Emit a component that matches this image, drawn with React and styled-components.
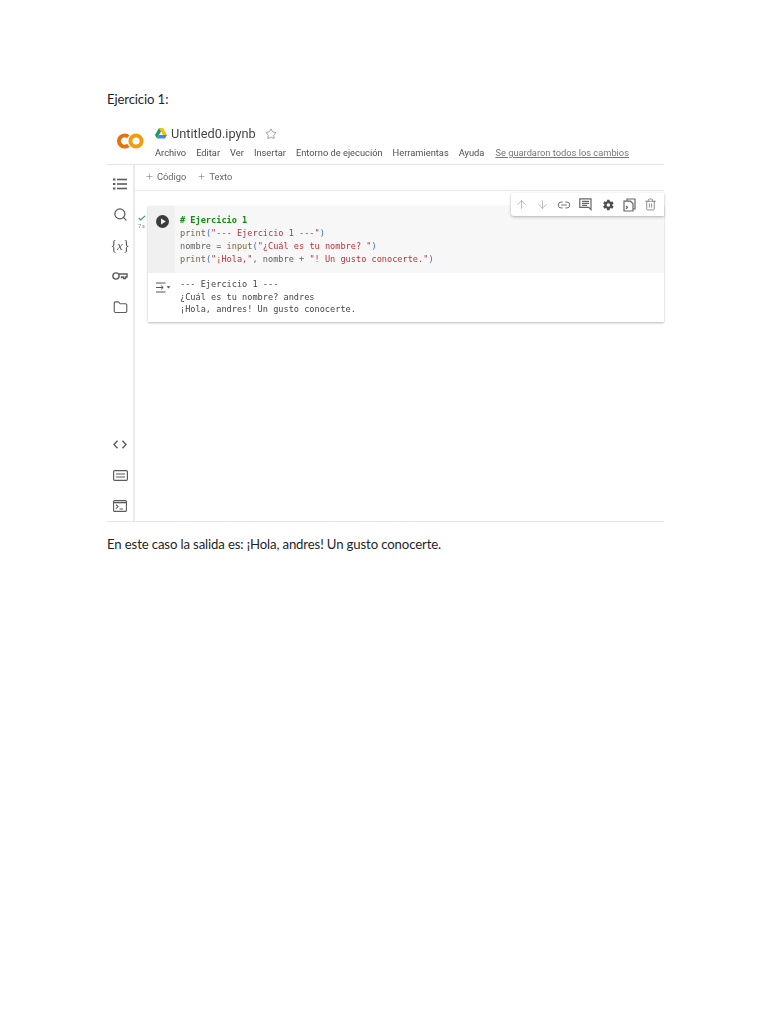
import React from "react";
import styled, { createGlobalStyle } from "styled-components";
import { ArrowUp, ArrowDown, Link2, Search, Folder, Star, Trash2, Plus } from "lucide-react";

const Global = createGlobalStyle`
  html, body { margin: 0; padding: 0; background: #fff; }
`;

const Page = styled.div`
  width: 768px;
  height: 1024px;
  box-sizing: border-box;
  padding: 91px 104px 0 107px;
  background: #fff;
  font-family: "Lato", "Liberation Sans", sans-serif;
  color: #1f1f1f;
  overflow: hidden;
`;

const Paragraph = styled.p`
  margin: 0;
  font-size: 13.2px;
  letter-spacing: -0.14px;
  line-height: 17px;
`;

const Shot = styled.div`
  margin: 14px 0 14px;
  height: 400px;
  display: flex;
  flex-direction: column;
  border-bottom: 1px solid #e6e6e6;
  box-sizing: border-box;
  font-family: "Roboto", "Liberation Sans", sans-serif;
  filter: blur(0.35px);
`;

const Header = styled.header`
  height: 43px;
  flex: none;
  display: flex;
  box-sizing: border-box;
  border-bottom: 1px solid #e4e4e4;
`;

const LogoCell = styled.div`
  width: 48px;
  flex: none;
  padding: 11px 0 0 10px;
  box-sizing: border-box;
`;

const HeaderText = styled.div`
  display: flex;
  flex-direction: column;
  padding-top: 2px;
`;

const TitleRow = styled.div`
  display: flex;
  align-items: center;
  height: 19px;
  gap: 4px;
  color: #444;
  font-size: 12.75px;
`;

const TitleText = styled.span`
  margin-right: 5px;
`;

const Menu = styled.nav`
  display: flex;
  gap: 10px;
  margin-top: 4px;
  font-size: 9.3px;
  line-height: 12px;
  color: #4f4f4f;
  white-space: nowrap;
`;

const Saved = styled.span`
  color: #777;
  text-decoration: underline;
  margin-left: 1px;
`;

const Body = styled.div`
  flex: 1;
  display: flex;
  min-height: 0;
`;

const Sidebar = styled.aside`
  width: 28px;
  flex: none;
  box-sizing: border-box;
  border-right: 2px solid #ebebeb;
  display: flex;
  flex-direction: column;
  justify-content: space-between;
  align-items: center;
  padding: 11px 0 7px;
  color: #5c5c5c;
`;

const SideGroup = styled.div`
  display: flex;
  flex-direction: column;
  align-items: center;
  gap: 14.8px;
`;

const SideSlot = styled.div`
  height: 16px;
  display: flex;
  align-items: center;
  justify-content: center;
  font-family: "Liberation Serif", serif;
  font-size: 14px;
  white-space: nowrap;
`;

const SideVar = styled.i`
  font-size: 13px;
`;

const Main = styled.main`
  flex: 1;
  min-width: 0;
  display: flex;
  flex-direction: column;
`;

const ActionBar = styled.div`
  height: 26px;
  flex: none;
  box-sizing: border-box;
  border-bottom: 1px solid #e8e8e8;
  display: flex;
  align-items: center;
  gap: 11px;
  padding: 0 0 2px 10px;
  font-size: 9.3px;
  color: #666;
`;

const ActionButton = styled.span`
  display: flex;
  align-items: center;
  gap: 3px;
`;

const Workspace = styled.div`
  position: relative;
  flex: 1;
  padding: 15px 0 0 0;
  display: flex;
  align-items: flex-start;
`;

const ExecState = styled.div`
  width: 13px;
  flex: none;
  padding-top: 9px;
  display: flex;
  flex-direction: column;
  align-items: center;
  gap: 2px;
  font-size: 5px;
  line-height: 6px;
  color: #777;
`;

const Cell = styled.section`
  flex: 1;
  min-width: 0;
  box-shadow: 0 1px 2px rgba(0, 0, 0, 0.28);
  background: #fff;
`;

const CodeRow = styled.div`
  display: flex;
  height: 67px;
  background: #f7f7f7;
`;

const Gutter = styled.div`
  width: 27px;
  flex: none;
  background: #f0f0f0;
  padding: 7px 0 0 8px;
  box-sizing: border-box;
`;

const Code = styled.pre`
  margin: 0;
  padding: 8px 0 0 5px;
  font-family: "DejaVu Sans Mono", "Liberation Mono", monospace;
  font-size: 8.6px;
  line-height: 13px;
  color: #5f5f5f;
`;

const Comment = styled.span` color: #118a11; font-weight: 700; `;
const Str = styled.span` color: #b8343f; `;
const Paren = styled.span` color: #3b6fd8; `;
const Builtin = styled.span` color: #75683c; `;

const OutputRow = styled.div`
  display: flex;
  height: 49px;
`;

const OutputGutter = styled.div`
  width: 27px;
  flex: none;
  padding: 5px 0 0 8px;
  box-sizing: border-box;
`;

const Output = styled.pre`
  margin: 0;
  padding: 5px 0 0 5px;
  font-family: "DejaVu Sans Mono", "Liberation Mono", monospace;
  font-size: 8.6px;
  line-height: 12.5px;
  color: #444;
`;

const CellTools = styled.div`
  position: absolute;
  top: 2px;
  right: 0;
  width: 153px;
  height: 23px;
  box-sizing: border-box;
  padding: 0 7px 0 4px;
  display: flex;
  align-items: center;
  justify-content: space-between;
  background: #fff;
  border-radius: 3px 0 0 3px;
  box-shadow: 0 1px 3px rgba(0, 0, 0, 0.3);
  color: #666;
`;

const ColabLogo = () => (
  <svg width="27" height="16" viewBox="0 0 27 16" fill="none">
    <circle cx="19" cy="8" r="5.6" stroke="#f39c0c" strokeWidth="4" />
    <path d="M11.3 3.8a5.6 5.6 0 1 0 0 8.4" stroke="#e8710a" strokeWidth="4" />
  </svg>
);

const DriveLogo = () => (
  <svg width="12" height="11" viewBox="0 0 12 11">
    <path d="M4 0h4l4 7H8z" fill="#fbbc04" />
    <path d="M4 0 0 7l2 3.5L6 3.5z" fill="#1a9e5c" />
    <path d="M2 10.5 4 7h8l-2 3.5z" fill="#4285f4" />
  </svg>
);

const ListIcon = () => (
  <svg width="14" height="12" viewBox="0 0 14 12" fill="currentColor">
    <rect x="0" y=".5" width="2.4" height="2" /><rect x="4" y=".7" width="10" height="1.6" />
    <rect x="0" y="5" width="2.4" height="2" /><rect x="4" y="5.2" width="10" height="1.6" />
    <rect x="0" y="9.5" width="2.4" height="2" /><rect x="4" y="9.7" width="10" height="1.6" />
  </svg>
);

const KeyIcon = () => (
  <svg width="16" height="10" viewBox="0 0 16 10" fill="none" stroke="currentColor" strokeWidth="1.4">
    <circle cx="4" cy="5" r="3.1" />
    <path d="M7 3h8v3h-1.5v1.5h-2V6H9.5v1.2" />
  </svg>
);

const CodeIcon = () => (
  <svg width="14" height="9" viewBox="0 0 14 9" fill="none" stroke="currentColor" strokeWidth="1.4">
    <path d="M4.5.8 1 4.5l3.5 3.7M9.5.8 13 4.5 9.5 8.2" />
  </svg>
);

const TextBoxIcon = () => (
  <svg width="15" height="11" viewBox="0 0 15 11" fill="none" stroke="currentColor" strokeWidth="1.2">
    <rect x=".6" y=".6" width="13.8" height="9.8" rx="1.2" />
    <path d="M3 4h9M3 7h9" />
  </svg>
);

const TerminalIcon = () => (
  <svg width="14" height="12" viewBox="0 0 14 12" fill="none" stroke="currentColor" strokeWidth="1.1">
    <rect x=".6" y=".6" width="12.8" height="10.8" rx="1" />
    <path d="M.6 2.6h12.8" strokeWidth="1.4" />
    <path d="m3 4.6 2 2-2 2M6.5 9h3.5" />
  </svg>
);

const RunIcon = () => (
  <svg width="13" height="13" viewBox="0 0 13 13">
    <circle cx="6.5" cy="6.5" r="6.5" fill="#3c3c3c" />
    <path d="M5 3.4v6.2l4.8-3.1z" fill="#f5f5f5" />
  </svg>
);

const CheckIcon = () => (
  <svg width="8" height="6" viewBox="0 0 8 6" fill="none" stroke="#2e9e5b" strokeWidth="1.1">
    <path d="m.8 3 2 2L7 .8" />
  </svg>
);

const OutputIcon = () => (
  <svg width="15" height="11" viewBox="0 0 15 11" fill="none" stroke="#555" strokeWidth="1">
    <path d="M0 1h9.5M0 10h9.5M0 5.5h7M5 3.5l2.2 2-2.2 2" />
    <path d="M10.5 4.2h4l-2 2.4z" fill="#555" stroke="none" />
  </svg>
);

const CommentIcon = () => (
  <svg width="13" height="13" viewBox="0 0 13 13" fill="none" stroke="currentColor" strokeWidth="1.2">
    <path d="M.8.8h11.2v10.8l-2.2-2.2H.8z" />
    <path d="M3 3.4h7M3 5.4h7M3 7.3h5" />
  </svg>
);

const GearIcon = () => (
  <svg width="14" height="14" viewBox="0 0 24 24">
    <path fill="#4f4f4f" fillRule="evenodd" d="M19.4 13a7.6 7.6 0 0 0 0-2l2.2-1.7-2.1-3.6-2.6 1a7.5 7.5 0 0 0-1.7-1l-.4-2.7h-4.2l-.4 2.7a7.5 7.5 0 0 0-1.7 1l-2.6-1-2.1 3.6L5.9 11a7.6 7.6 0 0 0 0 2l-2.2 1.7 2.1 3.6 2.6-1a7.5 7.5 0 0 0 1.7 1l.4 2.7h4.2l.4-2.7a7.5 7.5 0 0 0 1.7-1l2.6 1 2.1-3.6zM12.6 15a3 3 0 1 1 0-6 3 3 0 0 1 0 6z" />
  </svg>
);

const CopyIcon = () => (
  <svg width="13" height="14" viewBox="0 0 13 14" fill="none" stroke="currentColor" strokeWidth="1.2">
    <path d="M4 3V1h8v10h-2" />
    <path d="M1 3.2h6.5L10 5.6V13H1z" />
    <path d="m3 8 1.5 1.4L3 10.8" />
  </svg>
);

export default function App() {
  return (
    <Page>
      <Global />
      <Paragraph>Ejercicio 1:</Paragraph>
      <Shot>
        <Header>
          <LogoCell><ColabLogo /></LogoCell>
          <HeaderText>
            <TitleRow>
              <DriveLogo />
              <TitleText>Untitled0.ipynb</TitleText>
              <Star size={12} strokeWidth={1.4} color="#777" />
            </TitleRow>
            <Menu>
              <span>Archivo</span>
              <span>Editar</span>
              <span>Ver</span>
              <span>Insertar</span>
              <span>Entorno de ejecución</span>
              <span>Herramientas</span>
              <span>Ayuda</span>
              <Saved>Se guardaron todos los cambios</Saved>
            </Menu>
          </HeaderText>
        </Header>
        <Body>
          <Sidebar>
            <SideGroup>
              <SideSlot><ListIcon /></SideSlot>
              <SideSlot><Search size={15} strokeWidth={2} /></SideSlot>
              <SideSlot>{"{"}<SideVar>x</SideVar>{"}"}</SideSlot>
              <SideSlot><KeyIcon /></SideSlot>
              <SideSlot><Folder size={15} strokeWidth={1.8} /></SideSlot>
            </SideGroup>
            <SideGroup>
              <SideSlot><CodeIcon /></SideSlot>
              <SideSlot><TextBoxIcon /></SideSlot>
              <SideSlot><TerminalIcon /></SideSlot>
            </SideGroup>
          </Sidebar>
          <Main>
            <ActionBar>
              <ActionButton><Plus size={9} strokeWidth={1.3} />Código</ActionButton>
              <ActionButton><Plus size={9} strokeWidth={1.3} />Texto</ActionButton>
            </ActionBar>
            <Workspace>
              <ExecState>
                <CheckIcon />
                <span>7 s</span>
              </ExecState>
              <Cell>
                <CodeRow>
                  <Gutter><RunIcon /></Gutter>
                  <Code>
                    <Comment># Ejercicio 1</Comment>{"\n"}
                    <Builtin>print</Builtin><Paren>(</Paren><Str>"--- Ejercicio 1 ---"</Str><Paren>)</Paren>{"\n"}
                    nombre = <Builtin>input</Builtin><Paren>(</Paren><Str>"¿Cuál es tu nombre? "</Str><Paren>)</Paren>{"\n"}
                    <Builtin>print</Builtin><Paren>(</Paren><Str>"¡Hola,"</Str>, nombre + <Str>"! Un gusto conocerte."</Str><Paren>)</Paren>
                  </Code>
                </CodeRow>
                <OutputRow>
                  <OutputGutter><OutputIcon /></OutputGutter>
                  <Output>{"--- Ejercicio 1 ---\n¿Cuál es tu nombre? andres\n¡Hola, andres! Un gusto conocerte."}</Output>
                </OutputRow>
              </Cell>
              <CellTools>
                <ArrowUp size={13} strokeWidth={1.2} color="#999" />
                <ArrowDown size={13} strokeWidth={1.2} color="#999" />
                <Link2 size={14} strokeWidth={1.6} />
                <CommentIcon />
                <GearIcon />
                <CopyIcon />
                <Trash2 size={13} strokeWidth={1.3} />
              </CellTools>
            </Workspace>
          </Main>
        </Body>
      </Shot>
      <Paragraph>En este caso la salida es: ¡Hola, andres! Un gusto conocerte.</Paragraph>
    </Page>
  );
}
